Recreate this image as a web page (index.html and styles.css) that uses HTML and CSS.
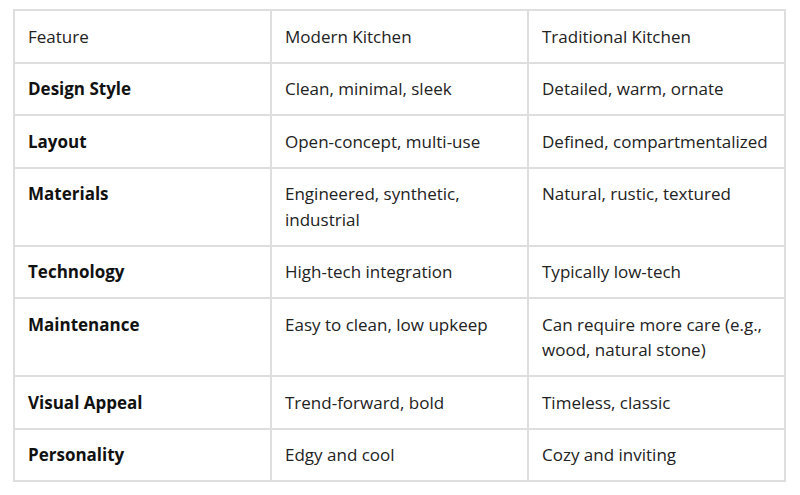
FILE: index.html
```html
<!DOCTYPE html>
<html lang="en">
<head>
<meta charset="utf-8">
<title>Modern vs Traditional Kitchen</title>
<link rel="stylesheet" href="styles.css">
</head>
<body>
<div class="page">
<table class="compare">
  <colgroup><col><col><col></colgroup>
  <thead>
    <tr><th>Feature</th><th>Modern Kitchen</th><th>Traditional Kitchen</th></tr>
  </thead>
  <tbody>
    <tr><td class="feat">Design Style</td><td>Clean, minimal, sleek</td><td>Detailed, warm, ornate</td></tr>
    <tr><td class="feat">Layout</td><td>Open-concept, multi-use</td><td>Defined, compartmentalized</td></tr>
    <tr><td class="feat">Materials</td><td>Engineered, synthetic, industrial</td><td>Natural, rustic, textured</td></tr>
    <tr><td class="feat">Technology</td><td>High-tech integration</td><td>Typically low-tech</td></tr>
    <tr><td class="feat">Maintenance</td><td>Easy to clean, low upkeep</td><td>Can require more care (e.g., wood, natural stone)</td></tr>
    <tr><td class="feat">Visual Appeal</td><td>Trend-forward, bold</td><td>Timeless, classic</td></tr>
    <tr><td class="feat">Personality</td><td>Edgy and cool</td><td>Cozy and inviting</td></tr>
  </tbody>
</table>
</div>
</body>
</html>
```
FILE: styles.css
```css
html, body {
  margin: 0;
  padding: 0;
  background: #ffffff;
}
body {
  font-family: "Open Sans", "Noto Sans", "Liberation Sans", sans-serif;
  font-size: 17px;
  color: #222222;
}
.page {
  padding: 9px 13px 0 13px;
}
.compare {
  width: 773px;
  border-collapse: collapse;
  table-layout: fixed;
}
.compare th,
.compare td {
  border: 2px solid #dedede;
  padding: 12.5px 13px;
  line-height: 25.5px;
  text-align: left;
  vertical-align: top;
  font-weight: 400;
}
.compare td.feat {
  font-weight: 700;
  color: #111111;
}
```
